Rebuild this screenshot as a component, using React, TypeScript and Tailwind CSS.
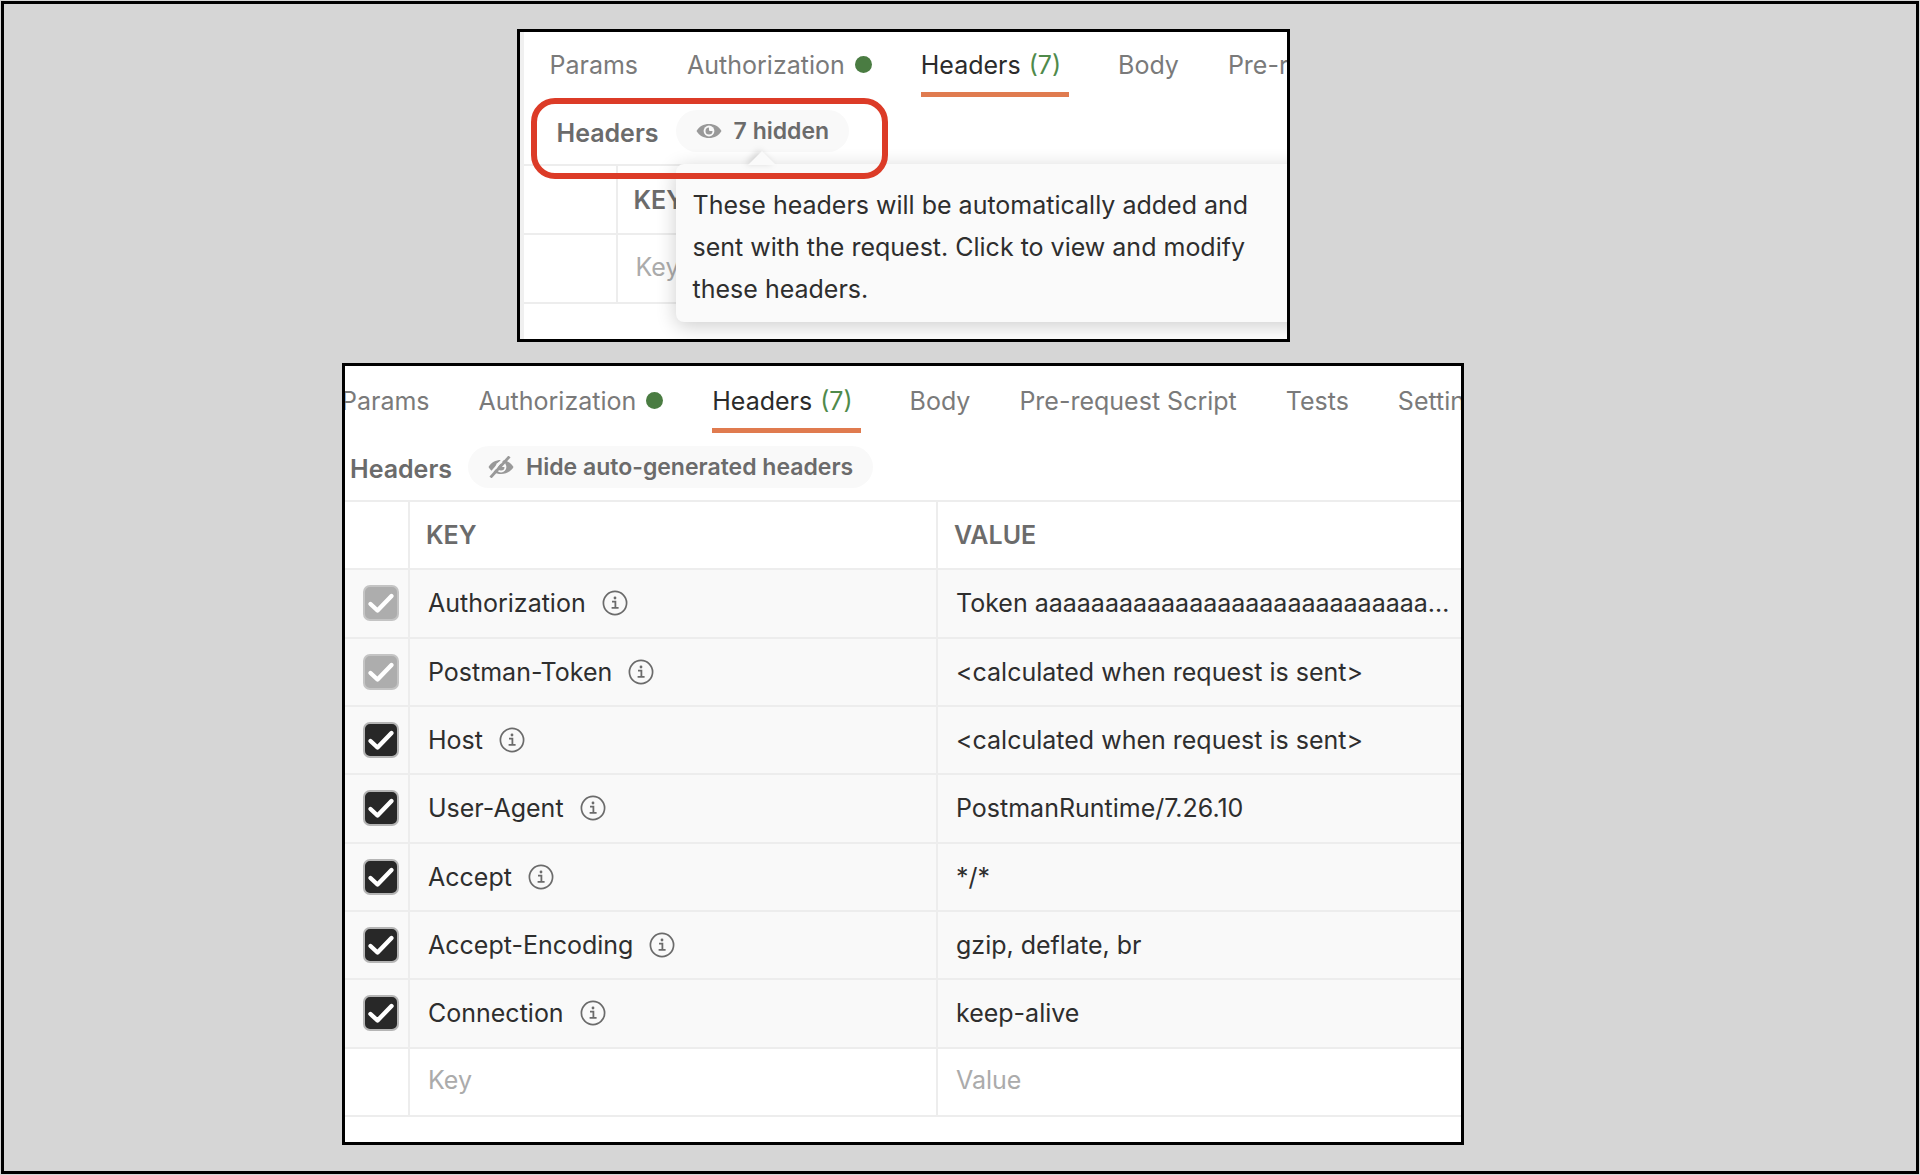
import { useState } from 'react';

interface HeaderRow {
  name: string;
  value: string;
  locked?: boolean;
}

const HEADERS: HeaderRow[] = [
  { name: 'Authorization', value: 'Token aaaaaaaaaaaaaaaaaaaaaaaaaaaaaaaaaaaaaa', locked: true },
  { name: 'Postman-Token', value: '<calculated when request is sent>', locked: true },
  { name: 'Host', value: '<calculated when request is sent>' },
  { name: 'User-Agent', value: 'PostmanRuntime/7.26.10' },
  { name: 'Accept', value: '*/*' },
  { name: 'Accept-Encoding', value: 'gzip, deflate, br' },
  { name: 'Connection', value: 'keep-alive' },
];

const TABS = ['Params', 'Authorization', 'Headers', 'Body', 'Pre-request Script', 'Tests', 'Settings'];

function EyeIcon({ off = false }: { off?: boolean }) {
  return (
    <svg className="h-[22px] w-[26px] shrink-0" viewBox="0 0 26 22" fill="none" aria-hidden="true">
      <path d="M0.5 11C3 6.6 7.6 4 13 4S23 6.6 25.5 11C23 15.4 18.4 18 13 18S3 15.4 0.5 11Z" fill="#999" />
      <circle cx="13" cy="11" r="5.4" fill="#f9f9f9" />
      <path d="M13 7.5a3.5 3.5 0 1 0 3.5 3.5h-2.5a1 1 0 0 1-1-1Z" fill="#999" />
      {off && (
        <>
          <path d="M1 19.5L18.5 -1" stroke="#f9f9f9" strokeWidth="2.4" />
          <path d="M2.5 21.5L21.5 0.5" stroke="#999" strokeWidth="2.8" />
        </>
      )}
    </svg>
  );
}

function InfoIcon() {
  return (
    <svg className="size-[26px]" viewBox="0 0 26 26" fill="none" stroke="#6b6b6b" aria-hidden="true">
      <circle cx="13" cy="13" r="11.6" strokeWidth="1.7" />
      <path d="M10 11.6h3.4v6M9.6 17.8h7" strokeWidth="1.8" />
      <circle cx="13" cy="8" r="1.4" fill="#6b6b6b" stroke="none" />
    </svg>
  );
}

function TabBar({ tabs }: { tabs: string[] }) {
  return (
    <nav className="flex h-[65px] items-stretch gap-[49px] whitespace-nowrap text-[#7a7a7a]">
      {tabs.map((tab) => (
        <button
          key={tab}
          type="button"
          className={
            tab === 'Headers'
              ? 'flex shrink-0 items-center gap-2 border-b-[5px] border-[#e07b4f] pt-[5px] pr-2 text-[#2b2b2b]'
              : 'flex shrink-0 items-center gap-2.5'
          }
        >
          {tab}
          {tab === 'Authorization' && <span className="size-[17px] rounded-full bg-[#4a7c42]" />}
          {tab === 'Headers' && <span className="text-[#4f8a4b]">(7)</span>}
        </button>
      ))}
    </nav>
  );
}

function CheckBox({ label, locked }: { label: string; locked?: boolean }) {
  const [checked, setChecked] = useState(true);

  return (
    <span className="mx-auto grid size-9 *:col-start-1 *:row-start-1">
      <input
        type="checkbox"
        aria-label={label}
        checked={checked}
        disabled={locked}
        onChange={(e) => setChecked(e.target.checked)}
        className="size-9 appearance-none rounded-[7px] border-2 border-[#b5b5b5] bg-white checked:bg-[#282828] disabled:border-[#c4c4c4] disabled:bg-[#adadad]"
      />
      {checked && (
        <svg className="pointer-events-none size-9" viewBox="0 0 36 36" fill="none" aria-hidden="true">
          <path d="M7.5 19L14.5 25.5L28.5 11" stroke="#fff" strokeWidth="4.4" strokeLinecap="round" strokeLinejoin="round" />
        </svg>
      )}
    </span>
  );
}

function HiddenHeadersPanel() {
  return (
    <section className="relative w-full max-w-[773px] overflow-hidden border-[3px] border-black bg-white">
      <div className="border-l-4 border-[#f0f0f0] pb-[35px]">
        <div className="pl-[26px]">
          <TabBar tabs={TABS.slice(0, 5)} />
        </div>
        <div className="flex h-[67px] items-center pl-[33px]">
          <h2 className="pt-1 font-semibold text-[#6b6b6b]">Headers</h2>
          <div className="relative ml-[17px]">
            <button
              type="button"
              className="flex h-[42px] items-center gap-3 rounded-full bg-[#f9f9f9] px-5 text-[23px] font-semibold text-[#6b6b6b]"
            >
              <EyeIcon />
              7 hidden
            </button>
            <div
              role="tooltip"
              className="absolute top-[54px] left-0 w-[640px] rounded-lg bg-[#fafafa] px-[17px] pt-5 pb-3 leading-[42px] text-[#2e2e2e] shadow-[0_4px_20px_rgba(0,0,0,0.2)]"
            >
              <svg className="absolute -top-[13px] left-[72px] h-[14px] w-[28px] drop-shadow-[-3px_-1px_3px_rgba(0,0,0,0.15)]" viewBox="0 0 28 14" aria-hidden="true">
                <path d="M0 14L14 0L28 14Z" fill="#fafafa" />
              </svg>
              These headers will be automatically added and
              <br />
              sent with the request. Click to view and modify
              <br />
              these headers.
            </div>
          </div>
        </div>
        <table className="h-[140px] w-full table-fixed border-collapse text-left">
          <tbody>
            <tr className="border-y-2 border-[#ededed]">
              <td className="w-[93px] border-r-2 border-[#ededed]" />
              <th className="h-[68px] pl-4 font-semibold text-[#6b6b6b]">KEY</th>
            </tr>
            <tr className="border-b-2 border-[#ededed]">
              <td className="border-r-2 border-[#ededed]" />
              <td className="h-[68px] pb-1 pl-[18px]">
                <input aria-label="Key" placeholder="Key" className="w-full outline-none placeholder:text-[#ababab]" />
              </td>
            </tr>
          </tbody>
        </table>
      </div>
      {/* callout around the "7 hidden" toggle */}
      <div className="pointer-events-none absolute top-[66px] left-[11px] h-[81px] w-[357px] rounded-[24px] border-[6px] border-[#dc3b27]" />
    </section>
  );
}

function HeadersPanel() {
  return (
    <section className="w-full max-w-[1122px] overflow-hidden border-[3px] border-black bg-white pb-[25px]">
      <div className="-ml-1 pt-0.5">
        <TabBar tabs={TABS} />
      </div>
      <div className="flex h-[67px] items-center gap-4 pl-[5px]">
        <h2 className="pt-1 font-semibold text-[#6b6b6b]">Headers</h2>
        <button
          type="button"
          className="flex h-[42px] items-center gap-3 rounded-full bg-[#f9f9f9] px-5 text-[23px] font-semibold text-[#6b6b6b]"
        >
          <EyeIcon off />
          Hide auto-generated headers
        </button>
      </div>
      <table className="h-[617px] w-full table-fixed border-collapse text-left text-[#2e2e2e]">
        <colgroup>
          <col className="w-[64px]" />
          <col className="w-[528px]" />
          <col />
        </colgroup>
        <tbody>
          <tr className="border-y-2 border-[#ededed] text-[#6b6b6b]">
            <td className="h-[68px] border-r-2 border-[#ededed]" />
            <th className="border-r-2 border-[#ededed] pl-4 font-semibold">KEY</th>
            <th className="pl-4 font-semibold">VALUE</th>
          </tr>
          {HEADERS.map((header) => (
            <tr key={header.name} className="border-b-2 border-[#ededed] bg-[#f9f9f9]">
              <td className="h-[68px] border-r-2 border-[#ededed] pl-2">
                <CheckBox label={header.name} locked={header.locked} />
              </td>
              <td className="border-r-2 border-[#ededed] pl-[18px]">
                <div className="flex items-center gap-4">
                  {header.name}
                  <button type="button" aria-label={`About ${header.name}`}>
                    <InfoIcon />
                  </button>
                </div>
              </td>
              <td className="truncate pr-2 pl-[18px]">{header.value}</td>
            </tr>
          ))}
          <tr className="border-b-2 border-[#ededed]">
            <td className="h-[68px] border-r-2 border-[#ededed]" />
            <td className="border-r-2 border-[#ededed] pb-1 pl-[18px]">
              <input aria-label="New key" placeholder="Key" className="w-full outline-none placeholder:text-[#ababab]" />
            </td>
            <td className="pb-1 pl-[18px]">
              <input aria-label="New value" placeholder="Value" className="w-full outline-none placeholder:text-[#ababab]" />
            </td>
          </tr>
        </tbody>
      </table>
    </section>
  );
}

export default function App() {
  return (
    <div className="flex min-h-screen bg-[#d6d6d6] p-px font-['Inter',sans-serif] text-[25px] leading-8">
      <main className="flex flex-1 flex-col items-center gap-[21px] border-[3px] border-black pt-[25px] pr-[114px] pb-[26px]">
        <HiddenHeadersPanel />
        <HeadersPanel />
      </main>
    </div>
  );
}
